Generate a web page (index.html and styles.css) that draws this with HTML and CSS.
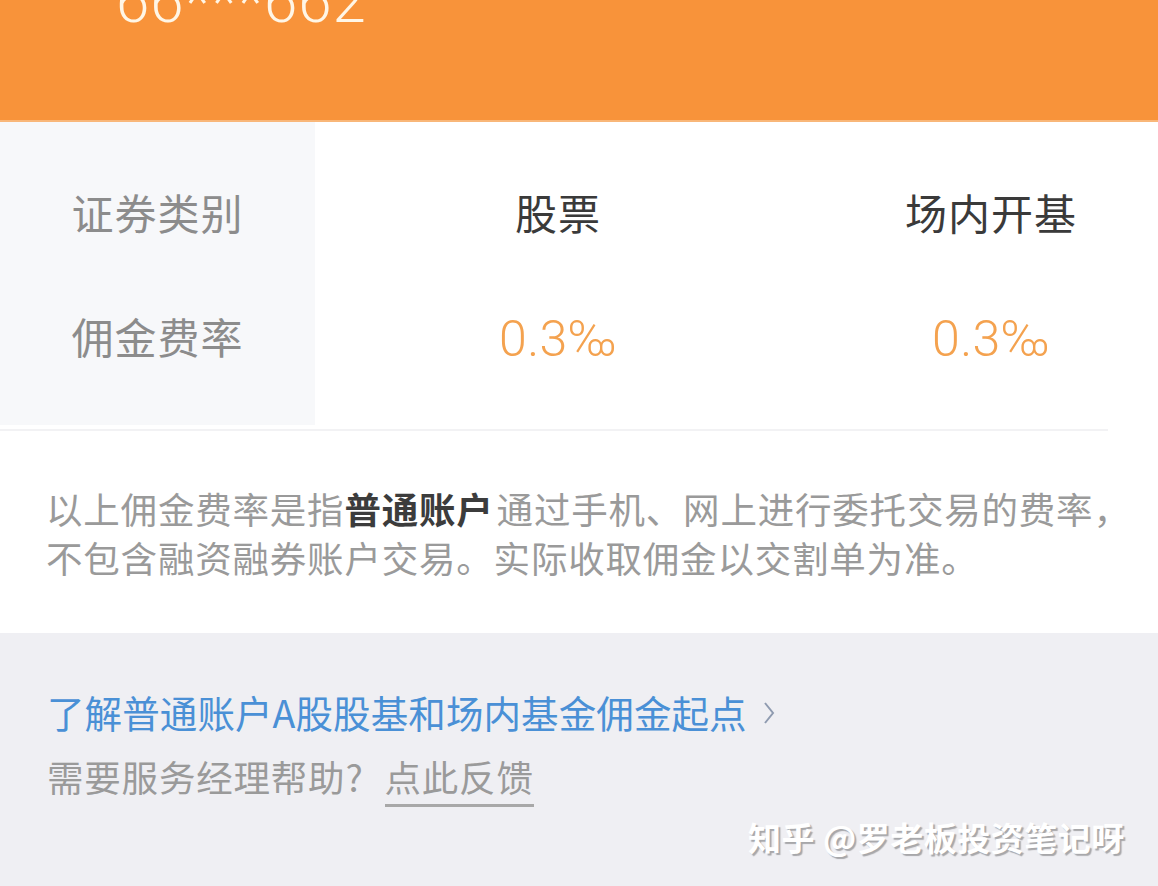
FILE: index.html
```html
<!DOCTYPE html>
<html lang="zh-CN">
<head>
<meta charset="utf-8">
<link rel="stylesheet" href="styles.css">
</head>
<body>
<div class="page">
  <header class="header">
    <div class="acct">66***662</div>
  </header>
  <section class="fee-table">
    <div class="col col-label">
      <div class="cell">证券类别</div>
      <div class="cell">佣金费率</div>
    </div>
    <div class="col col-stock">
      <div class="cell head">股票</div>
      <div class="cell rate">0.3‰</div>
    </div>
    <div class="col col-fund">
      <div class="cell head">场内开基</div>
      <div class="cell rate">0.3‰</div>
    </div>
  </section>
  <div class="divider"><div class="divider-line"></div></div>
  <section class="notice">
    <p>以上佣金费率是指<b>普通账户</b>通过手机、网上进行委托交易的费率，不包含融资融券账户交易。实际收取佣金以交割单为准。</p>
  </section>
  <section class="footer">
    <a class="link">了解普通账户A股股基和场内基金佣金起点<svg class="chev" width="12" height="24" viewBox="0 0 12 24"><path d="M2 2 L10 12 L2 22" fill="none" stroke="#8f9bb0" stroke-width="2"/></svg></a>
    <div class="help">需要服务经理帮助?<span class="feedback">点此反馈</span></div>
    <div class="watermark">知乎 @罗老板投资笔记呀</div>
  </section>
</div>
</body>
</html>
```

FILE: styles.css
```css
html, body {
  margin: 0;
  padding: 0;
}
body {
  background: #efeff3;
  font-family: "Noto Sans CJK SC", "Noto Sans", sans-serif;
  width: 1158px;
  height: 886px;
  overflow: hidden;
}
.page {
  position: relative;
  height: 886px;
}
.header {
  height: 120px;
  background: #f8933a;
  border-bottom: 2px solid #f9b779;
  overflow: hidden;
  padding-left: 116px;
}
.acct {
  font-family: Roboto, "Liberation Sans", sans-serif;
  font-weight: 300;
  font-size: 60px;
  line-height: 60px;
  margin-top: -28px;
  color: #fff6e6;
  letter-spacing: 1px;
}
.fee-table {
  display: flex;
  background: #fff;
}
.col {
  display: flex;
  flex-direction: column;
  padding: 27px 0 28px;
}
.col-label {
  width: 315px;
  background: #f7f8fa;
}
.col-stock {
  width: 486px;
}
.col-fund {
  flex: 1;
  padding-left: 23px;
}
.cell {
  height: 124px;
  display: flex;
  align-items: center;
  justify-content: center;
  font-size: 42px;
  color: #8c8c8c;
  letter-spacing: 1px;
}
.cell.head {
  color: #3a3a3a;
}
.cell.rate {
  font-family: Roboto, "Liberation Sans", sans-serif;
  font-weight: 300;
  font-size: 50px;
  letter-spacing: 0.5px;
  color: #f4a24f;
  padding-top: 8px;
  box-sizing: border-box;
}
.divider {
  background: #fff;
  padding: 4px 50px 2px 0;
}
.divider-line {
  height: 2px;
  background: #f2f2f4;
}
.notice {
  background: #fff;
  padding: 51px 6px 51px 46px;
}
.notice p {
  margin: 0;
  font-size: 36.5px;
  line-height: 49px;
  color: #9a9a9a;
  letter-spacing: 0.8px;
}
.notice b {
  color: #3c3c3c;
  font-weight: 700;
  margin-right: 3px;
}
.footer {
  padding: 49px 0 0 47px;
}
.link {
  display: flex;
  align-items: center;
  font-size: 37.5px;
  line-height: 60px;
  color: #4a90d6;
  letter-spacing: 0.1px;
}
.chev {
  margin-left: 16px;
  margin-top: 2px;
}
.help {
  margin-top: 5px;
  font-size: 36.5px;
  line-height: 60px;
  color: #9a9a9a;
  letter-spacing: 0.8px;
}
.feedback {
  display: inline-block;
  margin-left: 21px;
  line-height: 54px;
  border-bottom: 3px solid #a8a8a8;
}
.watermark {
  position: absolute;
  left: 748px;
  top: 812px;
  font-size: 33px;
  font-weight: 700;
  line-height: 50px;
  color: #ffffff;
  text-shadow: 2px 2px 1px rgba(0, 0, 0, 0.3);
  letter-spacing: 0.5px;
}
```
